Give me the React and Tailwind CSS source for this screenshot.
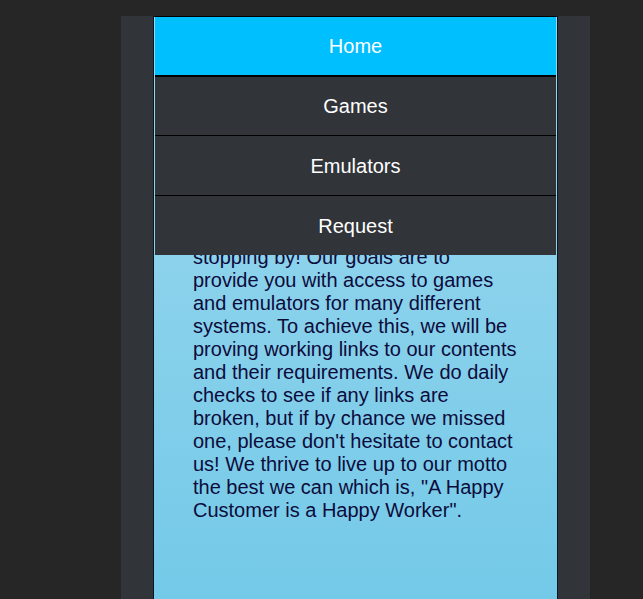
export default function App() {
  const font = { fontFamily: '"Liberation Sans", Arial, sans-serif' };
  return (
    <div className="h-[599px] overflow-hidden bg-[#262626] pt-4 pl-[121px]" style={font}>
      <div className="w-[469px] h-[583px] bg-[#313439] px-8">
        <div className="relative w-[405px] h-[600px] border border-[#0a1626] bg-gradient-to-b from-[#9cd8ee] to-[#72c9e8]">
          <div className="pt-[206px] pl-[39px] w-[365px]">
            <p className="text-[20px] leading-[23px] text-[#0c0c3c]">
              Welcome! Thank you for<br />
              stopping by! Our goals are to provide you with access to games and emulators for many different systems. To achieve this, we will be proving working links to our contents and their requirements. We do daily checks to see if any links are broken, but if by chance we missed one, please don't hesitate to contact us! We thrive to live up to our motto the best we can which is, "A Happy Customer is a Happy Worker".
            </p>
          </div>
          <nav className="absolute left-[1px] right-[1px] -top-px border-t border-black text-white text-[20px]">
            <a className="flex h-[60px] items-center justify-center bg-[#00bfff] border-b-2 border-black">Home</a>
            <a className="flex h-[59px] items-center justify-center bg-[#313439] border-b border-black">Games</a>
            <a className="flex h-[60px] items-center justify-center bg-[#313439] border-b border-black">Emulators</a>
            <a className="flex h-[59px] items-center justify-center bg-[#313439]">Request</a>
          </nav>
        </div>
      </div>
    </div>
  );
}
